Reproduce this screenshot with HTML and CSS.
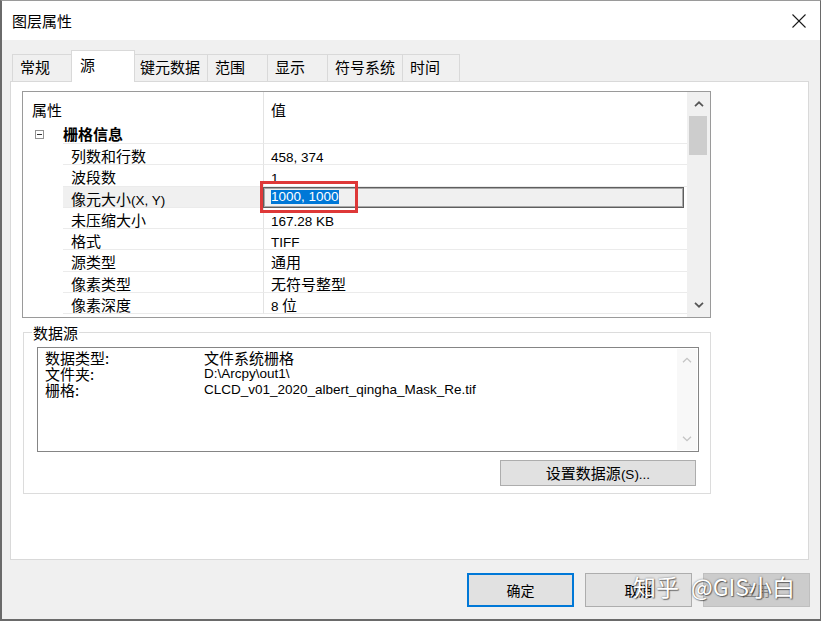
FILE: index.html
```html
<!DOCTYPE html>
<html lang="zh-CN">
<head>
<meta charset="utf-8">
<title>图层属性</title>
<link rel="stylesheet" href="styles.css">
</head>
<body>
<div class="window">
  <div class="titlebar">
    <span class="title">图层属性</span>
    <svg class="close" viewBox="0 0 14 14" aria-hidden="true">
      <line x1="0.5" y1="0.5" x2="13.5" y2="13.5"/>
      <line x1="13.5" y1="0.5" x2="0.5" y2="13.5"/>
    </svg>
  </div>

  <div class="content">
    <div class="tabs">
      <div class="tab">常规</div>
      <div class="tab active">源</div>
      <div class="tab">键元数据</div>
      <div class="tab">范围</div>
      <div class="tab">显示</div>
      <div class="tab">符号系统</div>
      <div class="tab">时间</div>
    </div>

    <div class="panel">
      <div class="grid">
        <div class="grid-main">
          <div class="grid-head">
            <div class="gh-prop">属性</div>
            <div class="gh-val">值</div>
          </div>
          <div class="row cat">
            <div class="ind"><span class="expander"></span></div>
            <div class="lab">栅格信息</div>
            <div class="val"></div>
          </div>
          <div class="row">
            <div class="ind"></div>
            <div class="lab">列数和行数</div>
            <div class="val"><span class="en">458, 374</span></div>
          </div>
          <div class="row">
            <div class="ind"></div>
            <div class="lab">波段数</div>
            <div class="val"><span class="en">1</span></div>
          </div>
          <div class="row sel">
            <div class="ind"></div>
            <div class="lab">像元大小<span class="en">(X, Y)</span></div>
            <div class="val">
              <div class="editor"><span class="sel-text">1000, 1000</span></div>
            </div>
          </div>
          <div class="row">
            <div class="ind"></div>
            <div class="lab">未压缩大小</div>
            <div class="val"><span class="en">167.28 KB</span></div>
          </div>
          <div class="row">
            <div class="ind"></div>
            <div class="lab">格式</div>
            <div class="val"><span class="en">TIFF</span></div>
          </div>
          <div class="row">
            <div class="ind"></div>
            <div class="lab">源类型</div>
            <div class="val">通用</div>
          </div>
          <div class="row">
            <div class="ind"></div>
            <div class="lab">像素类型</div>
            <div class="val">无符号整型</div>
          </div>
          <div class="row">
            <div class="ind"></div>
            <div class="lab">像素深度</div>
            <div class="val"><span class="en">8</span> 位</div>
          </div>
        </div>
        <div class="vscroll">
          <div class="vs-arrow">
            <svg class="chev" viewBox="0 0 10 6"><polyline points="1,5.2 5,1.3 9,5.2"/></svg>
          </div>
          <div class="vs-thumb"></div>
          <div class="vs-space"></div>
          <div class="vs-arrow">
            <svg class="chev" viewBox="0 0 10 6"><polyline points="1,0.8 5,4.7 9,0.8"/></svg>
          </div>
        </div>
      </div>

      <div class="group">
        <div class="group-label">数据源</div>
        <div class="ds-box">
          <div class="ds-content">
            <div>数据类型:</div><div>文件系统栅格</div>
            <div>文件夹:</div><div class="en">D:\Arcpy\out1\</div>
            <div>栅格:</div><div class="en">CLCD_v01_2020_albert_qingha_Mask_Re.tif</div>
          </div>
          <div class="ds-scroll">
            <div class="ds-arrow">
              <svg class="chev faint" viewBox="0 0 10 6"><polyline points="1,5.2 5,1.3 9,5.2"/></svg>
            </div>
            <div class="ds-arrow">
              <svg class="chev faint" viewBox="0 0 10 6"><polyline points="1,0.8 5,4.7 9,0.8"/></svg>
            </div>
          </div>
        </div>
        <div class="ds-actions">
          <div class="btn-set">设置数据源<span class="en">(S)...</span></div>
        </div>
      </div>
    </div>

    <div class="actions">
      <div class="btn primary">确定</div>
      <div class="btn">取消</div>
      <div class="btn disabled">应用</div>
    </div>
  </div>

  <div class="annot"></div>
  <div class="watermark">知乎<span class="wm-gap">@GIS小白</span></div>
</div>
</body>
</html>
```

FILE: styles.css
```css
* {
  box-sizing: border-box;
}

html,
body {
  margin: 0;
  padding: 0;
}

body {
  width: 821px;
  height: 621px;
  overflow: hidden;
  font-family: "Noto Sans CJK SC", "Noto Sans", sans-serif;
  font-size: 15px;
  color: #000;
  background: #f0f0f0;
}

.en {
  font-family: "Liberation Sans", Arial, sans-serif;
  font-size: 13.5px;
}

.window {
  position: relative;
  width: 821px;
  height: 621px;
  display: flex;
  flex-direction: column;
  background: #f0f0f0;
  border-top: 1px solid #9a9a9a;
  border-left: 2px solid #6a6a6a;
  border-right: 1px solid #6a6a6a;
  border-bottom: 2px solid #6a6a6a;
}

/* title bar */
.titlebar {
  flex: none;
  height: 39px;
  background: #fff;
  display: flex;
  align-items: center;
  justify-content: space-between;
  padding: 0 14px 0 10px;
}

.title {
  font-size: 15px;
  line-height: 20px;
}

.close {
  display: block;
  width: 14px;
  height: 14px;
  stroke: #1a1a1a;
  stroke-width: 1.1;
}

/* content */
.content {
  flex: 1;
  display: flex;
  flex-direction: column;
  padding: 10px 11px 0 8px;
}

/* tabs */
.tabs {
  position: relative;
  z-index: 1;
  display: flex;
  align-items: flex-end;
  height: 31px;
  padding-left: 2px;
}

.tab {
  height: 27px;
  margin-left: -1px;
  padding-left: 7px;
  border: 1px solid #d9d9d9;
  border-bottom: none;
  background: #f0f0f0;
  font-size: 15px;
  line-height: 23px;
  white-space: nowrap;
}

.tab:nth-child(1) { width: 60px; margin-left: 0; }
.tab:nth-child(2) { width: 64px; padding-left: 8px; }
.tab:nth-child(3) { width: 74px; padding-left: 5px; }
.tab:nth-child(4) { width: 61px; }
.tab:nth-child(5) { width: 61px; }
.tab:nth-child(6) { width: 76px; }
.tab:nth-child(7) { width: 58px; }

.tab.active {
  height: 32px;
  margin-bottom: -1px;
  padding-top: 2px;
  background: #fff;
}

/* panel */
.panel {
  height: 479px;
  background: #fff;
  border: 1px solid #d9d9d9;
  padding: 9px 0 0 11px;
}

/* property grid */
.grid {
  width: 689px;
  height: 227px;
  border: 1px solid #9a9a9a;
  display: flex;
  background: #fff;
}

.grid-main {
  width: 664px;
  flex: none;
}

.grid-head {
  display: flex;
  height: 32px;
}

.gh-prop {
  width: 240px;
  flex: none;
  padding: 8px 0 0 9px;
  line-height: 20px;
}

.gh-val {
  flex: 1;
  border-left: 1px solid #e3e3e3;
  padding: 8px 0 0 7px;
  line-height: 20px;
}

.row {
  display: flex;
  height: 21.3px;
}

.row .ind {
  width: 40px;
  flex: none;
  display: flex;
  align-items: center;
}

.row .lab {
  width: 200px;
  flex: none;
  border-bottom: 1px solid #ebebeb;
  padding: 2px 0 0 8px;
  line-height: 19px;
  white-space: nowrap;
}

.row .val {
  flex: 1;
  border-left: 1px solid #e3e3e3;
  border-bottom: 1px solid #ebebeb;
  padding: 2px 0 0 7px;
  line-height: 19px;
  white-space: nowrap;
}

.row.cat {
  height: 20px;
}

.row.cat .lab {
  padding: 0;
  line-height: 20px;
  font-weight: 700;
}

.row.cat .val {
  padding: 0;
}

.expander {
  position: relative;
  display: block;
  width: 9px;
  height: 9px;
  margin-left: 12px;
  border: 1px solid #919191;
}

.expander::after {
  content: "";
  position: absolute;
  left: 1px;
  top: 3px;
  width: 5px;
  height: 1px;
  background: #333;
}

.row.sel .lab {
  background: #f0f0f0;
}

.row.sel .val {
  padding: 0;
  border-left: none;
  border-bottom: none;
}

.editor {
  width: 421px;
  height: 100%;
  display: flex;
  align-items: center;
  padding-left: 7px;
  background: #f0f0f0;
  border: 1px solid #5e5e5e;
  box-shadow: inset 0 0 0 1px #a9a9a9;
}

.sel-text {
  font-family: "Liberation Sans", Arial, sans-serif;
  font-size: 13.5px;
  line-height: 14px;
  background: #0078d7;
  color: #fff;
}

/* grid scrollbar */
.vscroll {
  width: 23px;
  flex: none;
  display: flex;
  flex-direction: column;
  background: #f0f0f0;
}

.vs-arrow {
  height: 24px;
  flex: none;
  display: flex;
  align-items: center;
  justify-content: center;
}

.vs-thumb {
  height: 39px;
  flex: none;
  margin: 0 3px 0 2px;
  background: #cdcdcd;
}

.vs-space {
  flex: 1;
}

.chev {
  display: block;
  width: 10px;
  height: 6px;
  fill: none;
  stroke: #555;
  stroke-width: 1.7;
}

.chev.faint {
  stroke: #c4c4c4;
  stroke-width: 1.3;
}

/* data source group */
.group {
  width: 688px;
  margin: 14px 0 0 1px;
  border: 1px solid #dcdcdc;
  padding: 0 11px 7px 13px;
}

.group-label {
  display: table;
  margin: -10px 0 0 -5px;
  padding: 0 1px;
  background: #fff;
  line-height: 20px;
}

.ds-box {
  display: flex;
  height: 105px;
  margin-top: 4px;
  border: 1px solid #858585;
  background: #fff;
}

.ds-content {
  flex: 1;
  display: grid;
  grid-template-columns: 159px 1fr;
  align-content: start;
  padding: 2px 0 0 7px;
  line-height: 16px;
}

.ds-content .en {
  font-size: 13.5px;
}

.ds-scroll {
  width: 20px;
  flex: none;
  display: flex;
  flex-direction: column;
  justify-content: space-between;
  margin: 1px 1px 1px 0;
  background: #f8f8f8;
}

.ds-arrow {
  height: 22px;
  display: flex;
  align-items: center;
  justify-content: center;
}

.ds-actions {
  display: flex;
  justify-content: flex-end;
  margin-top: 8px;
  padding-right: 3px;
}

.btn-set {
  width: 196px;
  height: 26px;
  background: #e1e1e1;
  border: 1px solid #adadad;
  line-height: 24px;
  text-align: center;
}

/* dialog buttons */
.actions {
  display: flex;
  justify-content: flex-end;
  gap: 11px;
  margin: 13px -1px 0 0;
}

.btn {
  width: 107px;
  height: 34px;
  background: #e1e1e1;
  border: 1px solid #adadad;
  font-size: 14px;
  line-height: 32px;
  text-align: center;
}

.btn.primary {
  border: 2px solid #0078d7;
  line-height: 30px;
}

.btn.disabled {
  background: #cccccc;
  border-color: #bfbfbf;
  color: #838383;
}

/* overlays */
.annot {
  position: absolute;
  left: 258px;
  top: 180px;
  width: 98px;
  height: 32px;
  border: 3px solid #de3838;
}

.watermark {
  position: absolute;
  left: 631px;
  top: 571px;
  font-size: 23px;
  line-height: 28px;
  color: #fff;
  white-space: nowrap;
  text-shadow: 0 0 2px rgba(0, 0, 0, 0.55), 1px 1px 1px rgba(0, 0, 0, 0.45);
}

.wm-gap {
  margin-left: 12px;
}
```
